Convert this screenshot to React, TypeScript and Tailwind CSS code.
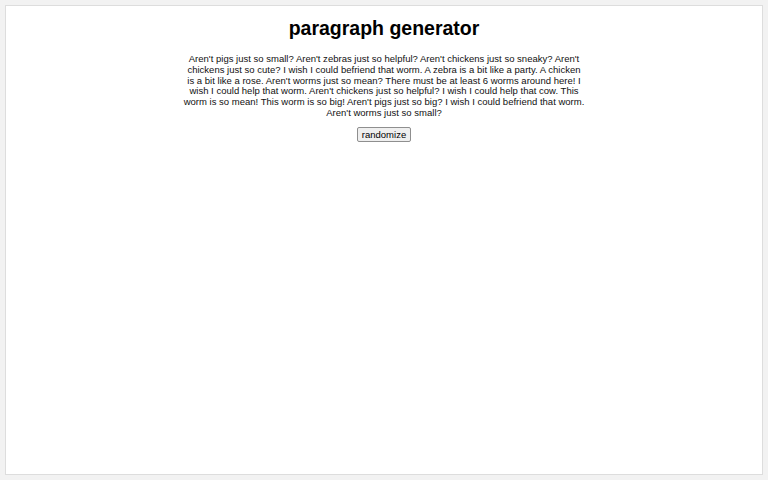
import React, { useState } from "react";

const SENTENCES = [
  "Aren't pigs just so small?",
  "Aren't zebras just so helpful?",
  "Aren't chickens just so sneaky?",
  "Aren't chickens just so cute?",
  "I wish I could befriend that worm.",
  "A zebra is a bit like a party.",
  "A chicken is a bit like a rose.",
  "Aren't worms just so mean?",
  "There must be at least 6 worms around here!",
  "I wish I could help that worm.",
  "Aren't chickens just so helpful?",
  "I wish I could help that cow.",
  "This worm is so mean!",
  "This worm is so big!",
  "Aren't pigs just so big?",
  "I wish I could befriend that worm.",
  "Aren't worms just so small?",
];

function shuffle(list: string[]) {
  const out = [...list];
  for (let i = out.length - 1; i > 0; i--) {
    const j = Math.floor(Math.random() * (i + 1));
    [out[i], out[j]] = [out[j], out[i]];
  }
  return out;
}

export default function App() {
  const [sentences, setSentences] = useState(SENTENCES);

  return (
    <div className="h-screen bg-[#f2f2f2] p-[5px] font-['Liberation_Sans',Arial,sans-serif] text-black">
      <div className="h-full bg-white border border-[#dddddd] flex flex-col items-center">
        <h1 className="mt-[10px] text-[19.5px] font-bold leading-[24px]">paragraph generator</h1>
        <p className="mt-[14px] w-[401px] text-center text-[9.5px] leading-[10.8px] tracking-[0.01px] text-[#111]">
          {sentences.join(" ")}
        </p>
        <button
          onClick={() => setSentences(shuffle(SENTENCES))}
          className="mt-[8px] px-[4px] h-[15px] text-[9.5px] leading-[13px] bg-[#efefef] border border-[#8f8f8f] rounded-[2px]"
        >
          randomize
        </button>
      </div>
    </div>
  );
}
